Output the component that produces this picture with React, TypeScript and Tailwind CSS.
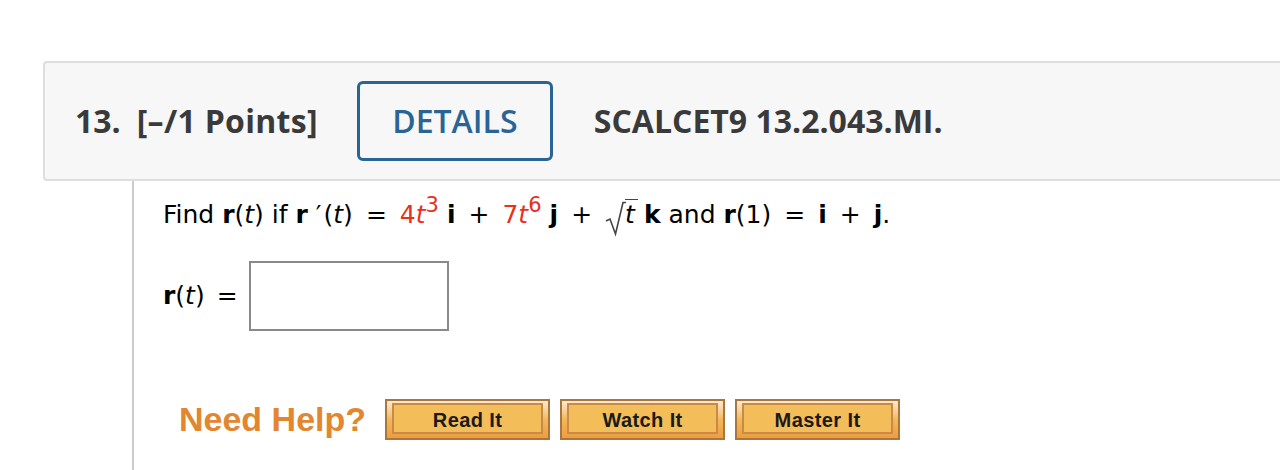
import React from 'react'

const mathFont = { fontFamily: '"DejaVu Sans", Verdana, sans-serif' }

function T() {
  return <i className="italic">t</i>
}

function Op({ children }: { children: React.ReactNode }) {
  return <span className="mx-[13px]">{children}</span>
}

function Sup({ children }: { children: React.ReactNode }) {
  return <span className="relative -top-[11px] text-[21px] leading-none">{children}</span>
}

function HelpButton({ label }: { label: string }) {
  return (
    <button
      className="h-[41px] w-[165px] border-2 border-[#a9773e] bg-gradient-to-b from-[#fcebd0] via-[#f2b85a] to-[#ee9c3e] px-[5px] pt-[2px] pb-[4px]"
      type="button"
    >
      <span className="flex h-full w-full items-center justify-center border-2 border-[#c78a48] bg-[#f3bd5a] pt-[2px] text-[20px] font-bold tracking-[0.4px] text-[#1a1a1a] [font-family:'Liberation_Sans',Arial,sans-serif]">
        {label}
      </span>
    </button>
  )
}

export default function App() {
  return (
    <div className="min-h-[470px] bg-white pt-[61px] pl-[43px]">
      <div className="flex h-[120px] items-center rounded-l-[4px] border-2 border-r-0 border-[#dedede] bg-[#f7f7f7] pl-[30px] text-[32px] font-bold text-[#3a3a3a] [font-family:'Open_Sans',sans-serif]">
        <span>13.</span>
        <span className="ml-[16px] tracking-[0.3px]">[–/1 Points]</span>
        <span className="ml-[39px] flex h-[80px] w-[196px] items-center justify-center rounded-[6px] border-[3px] border-[#2a6496] bg-[#f7f7f7] font-semibold text-[#2a6496]">
          DETAILS
        </span>
        <span className="ml-[41px]">SCALCET9 13.2.043.MI.</span>
      </div>

      <div className="ml-[89px] min-h-[289px] border-l-2 border-[#cccccc] pl-[29px] pt-[18px] text-[25px] text-black" style={mathFont}>
        <div className="flex h-[32px] items-baseline leading-[32px] whitespace-pre">
          <span>Find </span>
          <b>r</b>(<T />) if <b>r</b>
          <span className="ml-[8px] mr-[2px]">′</span>(<T />)
          <Op>=</Op>
          <span className="text-[#e8301c]">
            4<T />
            <Sup>3</Sup>
          </span>
          <b className="ml-[8px]">i</b>
          <Op>+</Op>
          <span className="text-[#e8301c]">
            7<T />
            <Sup>6</Sup>
          </span>
          <b className="ml-[8px]">j</b>
          <Op>+</Op>
          <span className="relative inline-block pl-[20px]">
            <svg width="21" height="36" viewBox="0 0 21 36" className="absolute left-0 top-[2px]">
              <path d="M1 20 L5 18 L10.5 33 L18 1.5 L21 1.5" fill="none" stroke="#444" strokeWidth="1.6" />
            </svg>
            <span className="inline-block border-t-[1.6px] border-[#444] pr-[3px] pt-[1px] leading-[28px]">
              <T />
            </span>
          </span>
          <b className="ml-[6px]">k</b> and <b>r</b>(1)
          <Op>=</Op>
          <b>i</b>
          <Op>+</Op>
          <b>j</b>.
        </div>

        <div className="mt-[30px] flex items-center">
          <span className="whitespace-pre">
            <b>r</b>(<T />)
          </span>
          <span className="ml-[12px]">=</span>
          <input className="ml-[11px] h-[70px] w-[200px] border-2 border-[#8a8a8a] bg-white outline-none" type="text" />
        </div>

        <div className="mt-[63px] flex items-center">
          <span className="ml-[16px] mr-[19px] text-[34px] font-bold text-[#e2862f] [font-family:'Liberation_Sans',Arial,sans-serif]">
            Need Help?
          </span>
          <div className="flex gap-[10px]">
            <HelpButton label="Read It" />
            <HelpButton label="Watch It" />
            <HelpButton label="Master It" />
          </div>
        </div>
      </div>
    </div>
  )
}
